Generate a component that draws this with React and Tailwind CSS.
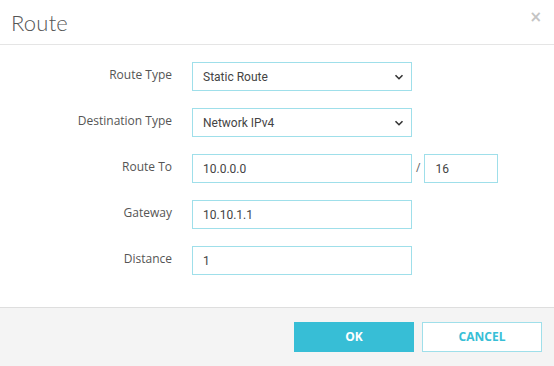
import React from "react";

function Chevron() {
  return (
    <svg width="10" height="10" viewBox="0 0 10 10" className="absolute right-[7px] top-1/2 -translate-y-1/2">
      <path d="M1.5 3.2 L5 6.7 L8.5 3.2" fill="none" stroke="#333" strokeWidth="1.6" />
    </svg>
  );
}

function Row({ label, children }) {
  return (
    <div className="flex items-center h-[29px]">
      <div className="w-[172px] text-right text-[12px] text-[#555] font-['Open_Sans',sans-serif] -mt-[4px]">{label}</div>
      <div className="ml-5 flex items-center">{children}</div>
    </div>
  );
}

function Select({ value }) {
  return (
    <div className="relative w-[220px] h-[29px] border border-[#9fdfea] bg-white flex items-center pl-[10px] text-[12px] text-[#444] font-['Roboto',sans-serif]">
      {value}
      <Chevron />
    </div>
  );
}

function Input({ value, w = "w-[220px]" }) {
  return (
    <div className={`${w} h-[29px] border border-[#9fdfea] bg-white flex items-center pl-[10px] text-[12px] text-[#444] font-['Roboto',sans-serif]`}>
      {value}
    </div>
  );
}

export default function App() {
  return (
    <div className="w-[554px] h-[366px] bg-white flex flex-col overflow-hidden">
      <div className="h-[45px] border-b border-[#e5e5e5] flex items-center justify-between pl-[11px] pr-[12px]">
        <div className="text-[22px] font-light text-[#555] font-['Lato',sans-serif] tracking-[0.2px]">Route</div>
        <div className="text-[#c4c4c4] text-[15px] font-bold font-['DejaVu_Sans',sans-serif] -mt-[10px]">×</div>
      </div>
      <div className="flex flex-col gap-[17px] pt-[17px] h-[262px]">
        <Row label="Route Type"><Select value="Static Route" /></Row>
        <Row label="Destination Type"><Select value="Network IPv4" /></Row>
        <Row label="Route To">
          <Input value="10.0.0.0" />
          <span className="mx-[4px] text-[12px] text-[#666] font-['Open_Sans',sans-serif] -mt-[2px]">/</span>
          <Input value="16" w="w-[74px]" />
        </Row>
        <Row label="Gateway"><Input value="10.10.1.1" /></Row>
        <Row label="Distance"><Input value="1" /></Row>
      </div>
      <div className="flex-1 border-t border-[#dedede] bg-[#f4f4f4] flex justify-end items-start pt-[14px] pr-[12px] gap-[8px]">
        <div className="w-[120px] h-[30px] bg-[#37bed6] text-white text-[12px] font-bold font-['Open_Sans',sans-serif] flex items-center justify-center">OK</div>
        <div className="w-[120px] h-[30px] bg-white border border-[#9fdfea] text-[#37bed6] text-[12px] font-bold font-['Open_Sans',sans-serif] flex items-center justify-center">CANCEL</div>
      </div>
    </div>
  );
}
